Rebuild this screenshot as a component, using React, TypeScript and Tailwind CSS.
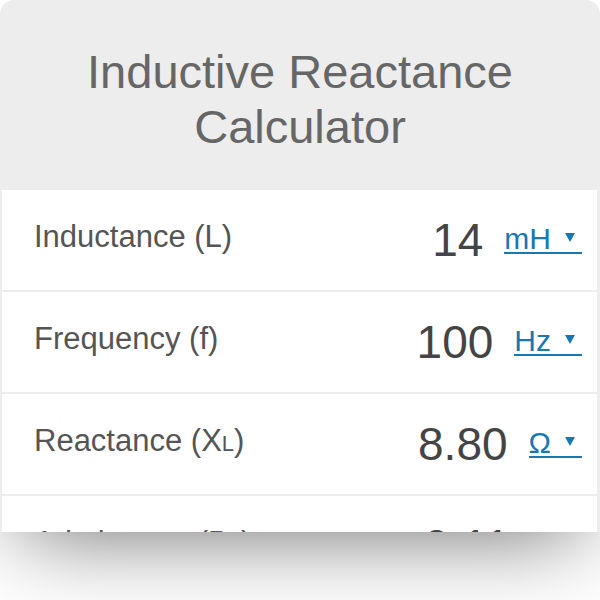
import React from 'react';

type Row = { label: React.ReactNode; value: string; unit: string };

const ROWS: Row[] = [
  { label: 'Inductance (L)', value: '14', unit: 'mH' },
  { label: 'Frequency (f)', value: '100', unit: 'Hz' },
  {
    label: (
      <>
        Reactance (X<span className="text-[22px]">L</span>)
      </>
    ),
    value: '8.80',
    unit: 'Ω',
  },
  {
    label: (
      <>
        Admittance (B<span className="text-[22px]">L</span>)
      </>
    ),
    value: '0.11',
    unit: 'S',
  },
];

const Caret = () => (
  <svg width="10" height="9" viewBox="0 0 10 9" className="mb-[10px]">
    <path d="M0 0 H10 L5 9 Z" fill="#1678b4" />
  </svg>
);

const App: React.FC = () => {
  return (
    <div className="relative w-[600px] h-[600px] overflow-hidden bg-white font-['Liberation_Sans',Arial,sans-serif]">
      {/* Card */}
      <div className="relative z-10 h-[532px] overflow-hidden rounded-t-[14px] bg-[#ededed]">
        <div className="h-[190px] pt-[44px] text-center text-[47px] leading-[55px] text-[#666666]">
          Inductive Reactance
          <br />
          Calculator
        </div>

        <div className="ml-[2px] mr-[3px] flex flex-col gap-[2px]">
          {ROWS.map((row, idx) => (
            <div key={idx} className="flex h-[100px] shrink-0 items-center justify-between bg-white pl-[32px] pr-[15px]">
              <span className="mb-[8px] text-[31px] leading-none text-[#555555]">{row.label}</span>
              <div className="flex items-center gap-[21px]">
                <span className="text-[46px] leading-none text-[#444444]">{row.value}</span>
                <span className="mb-[2px] inline-flex items-end gap-[14px] border-b-2 border-[#1678b4] pr-[7px] text-[30px] leading-[27px] text-[#1678b4]">
                  {row.unit}
                  <Caret />
                </span>
              </div>
            </div>
          ))}
        </div>
      </div>

      {/* Drop shadow under cut-off card */}
      <div className="relative h-[68px] overflow-hidden bg-white">
        <div className="absolute left-[20px] right-[20px] top-[-200px] h-[200px] bg-black/60 blur-[45px]"></div>
      </div>
    </div>
  );
};

export default App;
